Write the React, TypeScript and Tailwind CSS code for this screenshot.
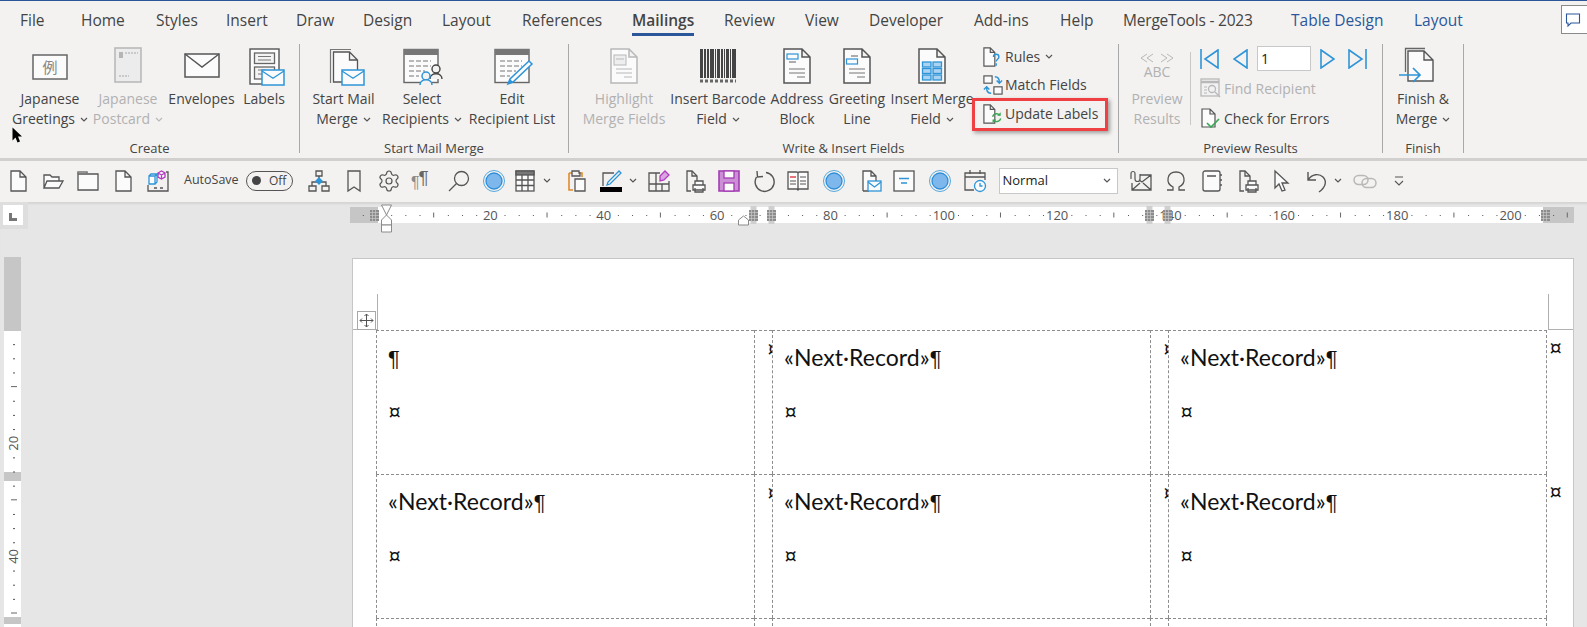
import React from "react";
import { Settings } from "lucide-react";

const INK = "#555555";
const BLUE = "#2e94d8";
const OFF = "#b8b8b8";

const page = (x: number, y: number, w: number, h: number, f: number) =>
  `M${x} ${y}H${x + w - f}L${x + w} ${y + f}V${y + h}H${x}ZM${x + w - f} ${y}V${y + f}H${x + w}`;

const Chevron = ({ color = "#555" }: { color?: string }) => (
  <svg width="8" height="5" viewBox="0 0 8 5" className="inline-block ml-[5px] align-[2px]">
    <path d="M1 1l3 3 3-3" fill="none" stroke={color} strokeWidth="1.2" />
  </svg>
);

const Mail = ({ x, y, w, h }: { x: number; y: number; w: number; h: number }) => (
  <g>
    <rect x={x} y={y} width={w} height={h} fill="#fbfbfb" stroke={BLUE} strokeWidth="1.5" />
    <path d={`M${x} ${y + 1}L${x + w / 2} ${y + h * 0.55}L${x + w} ${y + 1}`} fill="none" stroke={BLUE} strokeWidth="1.3" />
  </g>
);

const Big = ({
  cell,
  icon,
  lines,
  drop,
  off,
}: {
  cell: string;
  icon: React.ReactNode;
  lines: string[];
  drop?: boolean;
  off?: boolean;
}) => (
  <div className={`flex flex-col items-center shrink-0 ${cell} ${off ? "text-[#b1b1b1]" : "text-[#444]"}`}>
    <div className="h-[45px] flex items-center justify-center">{icon}</div>
    {lines.map((l, i) => (
      <div key={l} className="h-[20px] leading-[20px] whitespace-nowrap">
        {l}
        {drop && i === lines.length - 1 && <Chevron color={off ? OFF : "#555"} />}
      </div>
    ))}
  </div>
);

const Sep = () => <div className="w-px h-[109px] bg-[#a8a8a8] shrink-0" />;

const Group = ({ cls, label, children }: { cls: string; label: string; children: React.ReactNode }) => (
  <div className={`flex flex-col shrink-0 ${cls}`}>
    <div className="h-[94px] flex">{children}</div>
    <div className="h-[20px] leading-[20px] text-center text-[13px] text-[#444]">{label}</div>
  </div>
);

const Small = ({ cls, icon, text, drop, off }: { cls: string; icon: React.ReactNode; text: string; drop?: boolean; off?: boolean }) => (
  <div className={`flex items-center whitespace-nowrap ${cls} ${off ? "text-[#b1b1b1]" : "text-[#444]"}`}>
    {icon}
    <span>{text}</span>
    {drop && <Chevron />}
  </div>
);

/* ribbon icons */
const JapaneseIcon = () => (
  <svg width="36" height="26" viewBox="0 0 36 26">
    <rect x="1" y="1" width="34" height="24" fill="#fbfbfb" stroke="#666" strokeWidth="1.5" />
    <text x="18" y="19" textAnchor="middle" fontSize="15" fill="#888" fontFamily="'Noto Sans CJK JP',sans-serif">例</text>
  </svg>
);
const PostcardIcon = () => (
  <svg width="28" height="36" viewBox="0 0 28 36" className="mt-[-4px]">
    <rect x="1" y="1" width="26" height="34" fill="#ececec" stroke="#b9b9b9" strokeWidth="1.6" />
    <rect x="5" y="5" width="4" height="6" fill="#b5b5b5" />
    <path d="M11 6h13M5 29h10" stroke="#bdbdbd" strokeWidth="1.4" strokeDasharray="2 1" />
  </svg>
);
const EnvelopeIcon = () => (
  <svg width="36" height="25" viewBox="0 0 36 25" className="mt-[-2px]">
    <rect x="1" y="1" width="34" height="23" fill="#fbfbfb" stroke="#555" strokeWidth="1.5" />
    <path d="M1 1l17 13L35 1" fill="none" stroke="#555" strokeWidth="1.4" />
  </svg>
);
const LabelsIcon = () => (
  <svg width="36" height="38" viewBox="0 0 36 38" className="ml-[6px]">
    <rect x="1" y="1" width="29" height="35" fill="#fbfbfb" stroke="#555" strokeWidth="1.4" />
    <rect x="5.500" y="5" width="20" height="10.500" fill="#f3f3f3" stroke="#666" strokeWidth="1.3" />
    <rect x="5.500" y="19" width="20" height="12" fill="#f3f3f3" stroke="#666" strokeWidth="1.3" />
    <path d="M9 8.500h13M9 12h13M9 22h8M9 26h8" stroke="#777" strokeWidth="1.2" />
    <Mail x={13} y={22} w={22} h={15} />
  </svg>
);
const StartMergeIcon = () => (
  <svg width="36" height="38" viewBox="0 0 36 38" className="ml-[7px]">
    <path d="M1.500 35V1.500H22" fill="none" stroke="#777" strokeWidth="1.2" />
    <path d={page(4.5, 4, 24, 30, 8)} fill="#fbfbfb" stroke="#555" strokeWidth="1.3" />
    <Mail x={13} y={22} w={22} h={15} />
  </svg>
);
const ListBase = () => (
  <g>
    <rect x="1" y="1.500" width="34" height="33" fill="#fbfbfb" stroke="#666" strokeWidth="1.4" />
    <rect x="1" y="1" width="34" height="6" fill="#777" />
    <path d="M6 13h22M6 18h22M6 23h16M6 28h10" stroke="#777" strokeWidth="1.2" strokeDasharray="5 2" />
  </g>
);
const SelectIcon = () => (
  <svg width="40" height="38" viewBox="0 0 40 38" className="ml-[2px]">
    <ListBase />
    <circle cx="33" cy="21" r="4" fill="#f3f2f1" stroke="#444" strokeWidth="1.4" />
    <path d="M27 31c0-7 12-7 12 0" fill="#f3f2f1" stroke="#444" strokeWidth="1.4" />
    <circle cx="23" cy="28" r="4" fill="#f3f2f1" stroke={BLUE} strokeWidth="1.5" />
    <path d="M17 37c0-7 12-7 12 0" fill="#f3f2f1" stroke={BLUE} strokeWidth="1.5" />
  </svg>
);
const EditIcon = () => (
  <svg width="40" height="38" viewBox="0 0 40 38" className="ml-[4px]">
    <ListBase />
    <path d="M35 13l3 3-19 18-5 2 2-5z" fill="#fbfbfb" stroke={BLUE} strokeWidth="1.5" />
    <path d="M16 31l3 3-5 2z" fill={BLUE} />
  </svg>
);
const DocIcon = ({ stroke, children }: { stroke: string; children?: React.ReactNode }) => (
  <svg width="28" height="36" viewBox="0 0 28 36" className="mt-[-1px]">
    <path d={page(1, 1, 26, 34, 8)} fill="#fbfbfb" stroke={stroke} strokeWidth="1.5" />
    {children}
  </svg>
);
const TextRows = ({ c = "#777", from = 21 }: { c?: string; from?: number }) => (
  <path d={`M6 ${from}h16M6 ${from + 4}h16M14 ${from + 8}h8`} stroke={c} strokeWidth="1.2" />
);
const BarcodeIcon = () => {
  const bars = [[0, 3], [4, 2], [7, 2], [10, 4], [15, 1], [17, 3], [21, 2], [24, 1], [26, 3], [30, 1], [32, 4]];
  return (
    <svg width="37" height="36" viewBox="0 0 37 36" className="mt-[-1px]">
      {bars.map(([x, w]) => (
        <rect key={x} x={x} y="1" width={w} height="29" fill="#444" />
      ))}
      <path d="M0 33h36" stroke="#666" strokeWidth="3" strokeDasharray="3 2" />
    </svg>
  );
};
const RulesIcon = () => (
  <svg width="20" height="20" viewBox="0 0 22 22" className="mr-[2px] shrink-0">
    <path d={page(1, 1, 12, 20, 5)} fill="#fbfbfb" stroke="#555" strokeWidth="1.3" />
    <path d="M11.500 11c0-4 6-4 6 0 0 2.500-3 2.500-3 5M14.500 18v2.500" fill="none" stroke={BLUE} strokeWidth="1.6" />
  </svg>
);
const MatchIcon = () => (
  <svg width="20" height="20" viewBox="0 0 22 22" className="mr-[2px] shrink-0">
    <rect x="1" y="1" width="9" height="8" fill="#fbfbfb" stroke="#555" strokeWidth="1.3" />
    <rect x="12" y="13" width="9" height="8" fill="#fbfbfb" stroke="#555" strokeWidth="1.3" />
    <path d="M13 2c3 0 5 1 5 6M15 6l3 3 3-3M9 20c-3 0-5-1-5-6M1 16l3-3 3 3" fill="none" stroke={BLUE} strokeWidth="1.6" />
  </svg>
);
const UpdateIcon = () => (
  <svg width="20" height="20" viewBox="0 0 22 22" className="mr-[2px] shrink-0">
    <path d={page(1, 1, 12, 20, 5)} fill="#fbfbfb" stroke="#555" strokeWidth="1.3" />
    <path d="M10.500 14a4.500 4.500 0 0 1 8-1.500M19.500 16a4.500 4.500 0 0 1-8 1.500" fill="none" stroke="#3aa655" strokeWidth="1.6" />
    <path d="M19.500 9v4h-4zM10.500 21v-4h4z" fill="#3aa655" />
  </svg>
);
const PreviewIcon = () => (
  <div className="flex flex-col items-center mt-[1px]">
    <svg width="34" height="10" viewBox="0 0 34 10">
      <path d="M7 1L1 5l6 4M13 1L7 5l6 4M21 1l6 4-6 4M27 1l6 4-6 4" fill="none" stroke={OFF} strokeWidth="1" />
    </svg>
    <div className="text-[14px] leading-[18px] text-[#b1b1b1]">ABC</div>
  </div>
);
const NavIcon = ({ d, cls, w }: { d: string; cls: string; w: number }) => (
  <svg width={w} height="20" viewBox={`0 0 ${w} 20`} className={cls}>
    <path d={d} fill="none" stroke={BLUE} strokeWidth="1.6" />
  </svg>
);
const FindIcon = () => (
  <svg width="22" height="20" viewBox="0 0 22 20" className="mr-[2px] shrink-0">
    <rect x="1" y="1" width="18" height="17" fill="#f1f1f1" stroke={OFF} strokeWidth="1.3" />
    <path d="M1 4h18" stroke={OFF} strokeWidth="2.500" />
    <path d="M4 9h3M4 12h3M4 15h3" stroke={OFF} strokeWidth="1.2" />
    <circle cx="12" cy="11" r="3.500" fill="none" stroke={OFF} strokeWidth="1.3" />
    <path d="M15 14l5 5" stroke={OFF} strokeWidth="1.3" />
  </svg>
);
const CheckIcon = () => (
  <svg width="22" height="21" viewBox="0 0 22 21" className="ml-[1px] mr-[1px] shrink-0">
    <path d={page(1, 1, 13, 18, 5)} fill="#fbfbfb" stroke="#555" strokeWidth="1.2" />
    <path d="M6 15l4 4 8-8" fill="none" stroke="#3aa655" strokeWidth="1.6" />
  </svg>
);
const FinishIcon = () => (
  <svg width="36" height="37" viewBox="0 0 36 37" className="mt-[-2px] mr-[12px]">
    <path d="M6.500 25V1.500H26" fill="none" stroke="#666" strokeWidth="1.3" />
    <path d={page(9, 4, 25, 30, 9)} fill="#fbfbfb" stroke="#555" strokeWidth="1.4" />
    <path d="M0 28h20M14 21l7 7-7 7" fill="none" stroke={BLUE} strokeWidth="1.7" />
  </svg>
);

/* quick access icons */
const Q = ({ cls, children }: { cls?: string; children: React.ReactNode }) => (
  <svg width="24" height="24" viewBox="0 0 24 24" fill="none" stroke={INK} strokeWidth="1.3" className={`shrink-0 ${cls ?? ""}`}>
    {children}
  </svg>
);
const Ring = ({ cls }: { cls: string }) => (
  <Q cls={cls}>
    <circle cx="12" cy="12" r="8" fill="#7db7ec" stroke="#2e8fd8" />
    <circle cx="12" cy="12" r="10.500" stroke="#2e94d8" strokeWidth=".8" />
  </Q>
);
const PageQ = ({ cls }: { cls: string }) => (
  <Q cls={cls}>
    <path d={page(5, 2, 15, 20, 6)} fill="#fbfbfb" />
  </Q>
);
const QChevron = ({ cls }: { cls: string }) => (
  <svg width="8" height="5" viewBox="0 0 8 5" className={`shrink-0 ${cls}`}>
    <path d="M1 1l3 3 3-3" fill="none" stroke="#555" strokeWidth="1.2" />
  </svg>
);

const Grip = ({ x }: { x: number }) => (
  <g>
    <rect x={x - 4.5} y="3" width="9" height="11" fill="#8c8c8c" />
    <path d={`M${x - 4.5} 5.500h9M${x - 4.5} 8.500h9M${x - 4.5} 11.500h9M${x - 2} 3v11M${x + 1} 3v11`} stroke="#c8c8c8" strokeWidth=".7" />
  </g>
);

const HRuler = () => {
  const ticks = Array.from({ length: 86 }, (_, i) => i - 1);
  const X = (i: number) => 27 + i * 14.17;
  return (
    <svg width="1224" height="30" viewBox="0 0 1224 30" className="block overflow-visible">
      <rect x="0" y="0" width="1224" height="16" fill="#c6c6c6" />
      <rect x="28" y="0" width="1165" height="16" fill="#fff" />
      {[403.5, 421.5, 799.5, 817.5].map((x) => (
        <rect key={x} x={x - 3} y="-1" width="6" height="18" fill="#cfcfcf" />
      ))}
      {ticks.map((i) =>
        i === 0 ? null : i % 8 === 0 ? (
          <text key={i} x={X(i)} y="13" textAnchor="middle" fontSize="13" fill="#555" fontFamily="'Open Sans',sans-serif">
            {(i / 8) * 20}
          </text>
        ) : i % 8 === 4 ? (
          <path key={i} d={`M${X(i)} 5.500v5`} stroke="#666" />
        ) : (
          <rect key={i} x={X(i)} y="8" width="1" height="1" fill="#555" />
        )
      )}
      {[24.5, 403.5, 421.5, 799.5, 817.5, 1195.5].map((x) => (
        <Grip key={x} x={x} />
      ))}
      <path d="M31.500 -2h10L36.500 8zM36.500 8l5 5v5h-10v-5z" fill="#fff" stroke="#8a8a8a" />
      <path d="M31.500 18h10v7h-10z" fill="#fff" stroke="#8a8a8a" />
      <path d="M388.500 18v-5l5-4 5 4v5z" fill="#fff" stroke="#8a8a8a" />
    </svg>
  );
};

const VRuler = () => {
  const ticks = Array.from({ length: 21 }, (_, i) => i + 1);
  const Y = (i: number) => 73 + i * 14.15;
  return (
    <svg width="17" height="370" viewBox="0 0 17 370" className="block">
      <rect width="17" height="370" fill="#fff" />
      <rect width="17" height="74" fill="#c6c6c6" />
      <rect y="215" width="17" height="9" fill="#c6c6c6" />
      <rect y="360" width="17" height="7" fill="#c6c6c6" />
      {ticks.map((i) =>
        i % 8 === 0 ? (
          <text key={i} x="0" y="0" transform={`translate(14 ${Y(i)}) rotate(-90)`} textAnchor="middle" fontSize="13" fill="#555" fontFamily="'Open Sans',sans-serif">
            {(i / 8) * 20}
          </text>
        ) : i % 8 === 4 ? (
          <path key={i} d={`M7 ${Y(i)}h6`} stroke="#666" />
        ) : (
          <rect key={i} x="9" y={Y(i)} width="2" height="1" fill="#555" />
        )
      )}
    </svg>
  );
};

const Pilcrow = () => <span className="font-['Liberation_Sans',sans-serif] text-[22px]">¶</span>;

const LabelCell = ({ next, last }: { next?: boolean; last?: boolean }) => (
  <div className={`border-l border-t border-dashed border-[#8c8c8c] pl-[11px] ${last ? "border-r" : ""}`}>
    <div className="h-[52px] leading-[52px] text-[23px] tracking-[0.05px] whitespace-nowrap">
      {next && "«Next·Record»"}
      <Pilcrow />
    </div>
    <div className="h-[56px] leading-[56px] text-[23px]">¤</div>
  </div>
);
const GapCell = () => (
  <div className="border-l border-t border-dashed border-[#8c8c8c] pl-[12px] overflow-hidden">
    <div className="h-[34px] leading-[34px] text-[23px]">¤</div>
  </div>
);
const RowEnd = () => <div className="pl-[2px] h-[34px] leading-[34px] text-[23px]">¤</div>;

const Row = ({ first }: { first?: boolean }) => (
  <>
    <LabelCell next={!first} />
    <GapCell />
    <LabelCell next />
    <GapCell />
    <LabelCell next last />
    <RowEnd />
  </>
);

const tabs = [
  { t: "File", c: "w-[61px]" },
  { t: "Home", c: "w-[75px]" },
  { t: "Styles", c: "w-[70px]" },
  { t: "Insert", c: "w-[70px]" },
  { t: "Draw", c: "w-[67px]" },
  { t: "Design", c: "w-[79px]" },
  { t: "Layout", c: "w-[80px]" },
  { t: "References", c: "w-[110px]" },
  { t: "Mailings", c: "w-[92px] font-semibold" },
  { t: "Review", c: "w-[81px]" },
  { t: "View", c: "w-[64px]" },
  { t: "Developer", c: "w-[105px]" },
  { t: "Add-ins", c: "w-[86px]" },
  { t: "Help", c: "w-[63px]" },
  { t: "MergeTools - 2023", c: "w-[168px] tracking-[-0.2px]" },
  { t: "Table Design", c: "w-[123px] text-[#2b579a]" },
  { t: "Layout", c: "w-[60px] text-[#2b579a]" },
];

export default function App() {
  return (
    <div className="relative w-[1587px] h-[627px] overflow-hidden bg-[#e6e6e6] font-['Open_Sans',sans-serif] text-[14px] text-[#444]">
      {/* ribbon */}
      <div className="h-[158px] bg-[#f3f2f1] border-t border-[#2b579a]">
        <div className="h-[43px] flex pl-[20px]">
          {tabs.map((tab) => (
            <div key={tab.t + tab.c} className={`shrink-0 pt-[9px] leading-[20px] text-[15.5px] ${tab.c}`}>
              <span className={`inline-block whitespace-nowrap ${tab.t === "Mailings" ? "border-b-[3px] border-[#2b579a] pb-[3px]" : ""}`}>{tab.t}</span>
            </div>
          ))}
          <div className="ml-auto mt-[4px] w-[26px] h-[29px] bg-white border-l border-y border-[#8a8a8a] flex items-center justify-center">
            <svg width="16" height="16" viewBox="0 0 16 16" className="ml-[-3px]">
              <path d="M1.500 2h13v9H6l-3 3v-3H1.500z" fill="#fff" stroke="#2b579a" strokeWidth="1.1" />
            </svg>
          </div>
        </div>
        <div className="flex h-[114px]">
          <Group cls="w-[299px]" label="Create">
            <Big cell="w-[100px]" icon={<JapaneseIcon />} lines={["Japanese", "Greetings"]} drop />
            <Big cell="w-[56px]" icon={<PostcardIcon />} lines={["Japanese", "Postcard"]} drop off />
            <Big cell="w-[91px]" icon={<EnvelopeIcon />} lines={["Envelopes"]} />
            <Big cell="w-[34px]" icon={<LabelsIcon />} lines={["Labels"]} />
          </Group>
          <Sep />
          <Group cls="w-[268px]" label="Start Mail Merge">
            <Big cell="w-[87px]" icon={<StartMergeIcon />} lines={["Start Mail", "Merge"]} drop />
            <Big cell="w-[70px]" icon={<SelectIcon />} lines={["Select", "Recipients"]} drop />
            <Big cell="w-[110px]" icon={<EditIcon />} lines={["Edit", "Recipient List"]} />
          </Group>
          <Sep />
          <Group cls="w-[549px]" label="Write & Insert Fields">
            <Big
              cell="w-[110px]"
              off
              icon={
                <DocIcon stroke={OFF}>
                  <rect x="4" y="7" width="12" height="10" fill="#eee" stroke={OFF} />
                  <path d="M6 11h8" stroke={OFF} />
                  <TextRows c={OFF} />
                </DocIcon>
              }
              lines={["Highlight", "Merge Fields"]}
            />
            <Big cell="w-[78px]" icon={<BarcodeIcon />} lines={["Insert Barcode", "Field"]} drop />
            <Big
              cell="w-[80px]"
              icon={
                <DocIcon stroke="#555">
                  <rect x="4" y="6" width="11" height="5" fill="none" stroke={BLUE} strokeWidth="1.2" />
                  <path d="M6 14h7" stroke="#777" strokeWidth="1.2" />
                  <TextRows />
                </DocIcon>
              }
              lines={["Address", "Block"]}
            />
            <Big
              cell="w-[40px]"
              icon={
                <DocIcon stroke="#555">
                  <path d="M8 8h7" stroke="#777" strokeWidth="1.2" />
                  <rect x="3.500" y="11" width="11" height="5" fill="none" stroke={BLUE} strokeWidth="1.2" />
                  <TextRows />
                </DocIcon>
              }
              lines={["Greeting", "Line"]}
            />
            <Big
              cell="w-[102px] ml-[4px]"
              icon={
                <DocIcon stroke="#555">
                  <g fill="#a9d2f3" stroke={BLUE} strokeWidth="1.3">
                    <rect x="4.500" y="14" width="8.500" height="5" />
                    <rect x="15" y="14" width="8.500" height="5" />
                    <rect x="4.500" y="20.500" width="8.500" height="5" />
                    <rect x="15" y="20.500" width="8.500" height="5" />
                    <rect x="4.500" y="27" width="8.500" height="5" />
                    <rect x="15" y="27" width="8.500" height="5" />
                  </g>
                </DocIcon>
              }
              lines={["Insert Merge", "Field"]}
              drop
            />
            <div className="flex flex-col shrink-0">
              <Small cls="h-[25px]" icon={<RulesIcon />} text="Rules" drop />
              <Small cls="h-[29px] mt-[1px]" icon={<MatchIcon />} text="Match Fields" />
              <Small cls="h-[29px]" icon={<UpdateIcon />} text="Update Labels" />
            </div>
          </Group>
          <Sep />
          <Group cls="w-[263px]" label="Preview Results">
            <Big cell="w-[71px] pl-[5px]" off icon={<PreviewIcon />} lines={["Preview", "Results"]} />
            <div className="w-px h-[73px] mt-[8px] bg-[#c8c8c8] shrink-0" />
            <div className="flex flex-col pl-[9px]">
              <div className="flex items-center h-[25px] mt-[2px]">
                <NavIcon w={19} cls="" d="M1 0v20M18 1L5 10l13 9z" />
                <NavIcon w={15} cls="ml-[14px]" d="M14 1L1 10l13 9z" />
                <div className="ml-[9px] w-[54px] h-[25px] bg-white border border-[#c8c8c8] pl-[3px] leading-[23px] text-[#222]">1</div>
                <NavIcon w={15} cls="ml-[9px]" d="M1 1l13 9-13 9z" />
                <NavIcon w={19} cls="ml-[13px]" d="M18 0v20M1 1l13 9-13 9z" />
              </div>
              <Small cls="h-[20px] mt-[7px]" off icon={<FindIcon />} text="Find Recipient" />
              <Small cls="h-[20px] mt-[10px]" icon={<CheckIcon />} text="Check for Errors" />
            </div>
          </Group>
          <Sep />
          <Group cls="w-[80px]" label="Finish">
            <Big cell="w-[80px]" icon={<FinishIcon />} lines={["Finish &", "Merge"]} drop />
          </Group>
          <Sep />
        </div>
      </div>
      <div className="h-[3px] bg-[#d2d0ce]" />

      {/* quick access toolbar */}
      <div className="h-[41px] bg-[#f3f2f1] flex items-center pl-[6px] pb-[2px]">
        <PageQ cls="" />
        <Q cls="ml-[10.5px]">
          <path d="M3 19V6h6l2 2h7v4M3 19l3-7h16l-4 7z" fill="#fbfbfb" />
        </Q>
        <Q cls="ml-[11px]">
          <path d="M2 5h20v16H2z" fill="#fbfbfb" />
          <path d="M2 5V3h9v2" strokeWidth="1.6" stroke="#777" />
        </Q>
        <PageQ cls="ml-[11.5px]" />
        <Q cls="ml-[10.5px]">
          <path d="M20 3h2v19H2v-6" />
          <path d="M8 19h3M14 19h3" />
          <path d="M3 7h6v8H3zM3 7l2-2h6l-2 2M9 15l2-2V5" stroke={BLUE} fill="#fbfbfb" />
          <path d="M12 4l3.500-2 3.500 2v4l-3.500 2-3.500-2zM12 4l3.500 2 3.500-2M15.500 6v4" stroke="#b13cc0" fill="#fbfbfb" />
        </Q>
        <div className="ml-[14.5px] w-[53px] text-[12.5px] whitespace-nowrap">AutoSave</div>
        <div className="ml-[9px] w-[47px] h-[20px] rounded-full border border-[#555] flex items-center pl-[5px] shrink-0">
          <div className="w-[9px] h-[9px] rounded-full bg-[#444]" />
          <span className="ml-[8px] text-[12px]">Off</span>
        </div>
        <Q cls="ml-[14px]">
          <path d="M9 2h6v5H9zM2 17h7v5H2zM15 17h7v5h-7zM12 7v3M5 17v-4h14v4" />
          <path d="M12 9l3 3-3 3-3-3z" fill={BLUE} stroke={BLUE} />
        </Q>
        <Q cls="ml-[10.5px]">
          <path d="M6 2h12v20l-6-4-6 4z" />
        </Q>
        <Settings size={24} strokeWidth={1.2} color={INK} className="ml-[11px] shrink-0" />
        <div className="ml-[10.5px] w-[24px] shrink-0 whitespace-nowrap font-['Liberation_Sans',sans-serif] leading-[20px] text-[#8a8a8a] tracking-[-1px]">
          <span className="inline-block translate-y-[2px] text-[16px]">¶</span>
          <span className="inline-block -translate-y-[2px] text-[19px] text-[#666]">¶</span>
        </div>
        <Q cls="ml-[12px]">
          <circle cx="14.500" cy="9.500" r="7" />
          <path d="M9.500 14.500L2 22" />
        </Q>
        <Ring cls="ml-[11px]" />
        <Q cls="ml-[7px]">
          <rect x="3" y="2" width="18" height="20" fill="#fbfbfb" />
          <rect x="3" y="2" width="18" height="4" fill="#777" />
          <path d="M3 11h18M3 16.500h18M9 6v16M15 6v16" />
        </Q>
        <QChevron cls="ml-[6px]" />
        <Q cls="ml-[13px]">
          <path d="M5 4h13v4M5 4v17h4" stroke="#e08a2b" strokeWidth="1.6" />
          <path d="M8 4V2h7v2h1v3H8z" fill="#f3f2f1" />
          <path d="M11 10h10v12H11z" fill="#fbfbfb" />
        </Q>
        <Q cls="ml-[11px]">
          <path d="M15 4H4v13" />
          <path d="M20 2l2 2-11 11-3 1 1-3z" stroke={BLUE} />
          <rect x="1" y="18" width="22" height="5" fill="#000" stroke="none" />
        </Q>
        <QChevron cls="ml-[5.5px]" />
        <Q cls="ml-[10.5px]">
          <path d="M13 4H2v18h20V12M9 4v18M2 15h20M15 15v7" />
          <path d="M13 7l5-5 4 4-5 5-4 1z" stroke="#b13cc0" fill="#d9a6e0" />
        </Q>
        <Q cls="ml-[12px]">
          <path d="M14 12V7l-5-5H4v20h4" />
          <path d="M9 2v5h5" />
          <path d="M10 16h12v5H10zM12 16v-4h8v4M12 19v4h8v-4" fill="#fbfbfb" />
        </Q>
        <Q cls="ml-[10px]">
          <path d="M2 2h20v20H2z" fill="#cc8fd6" stroke="#a23db3" strokeWidth="1.6" />
          <rect x="7" y="2" width="10" height="7" fill="#fbfbfb" stroke="#a23db3" />
          <rect x="7" y="14" width="10" height="8" fill="#fbfbfb" stroke="#a23db3" />
        </Q>
        <Q cls="ml-[10.5px]">
          <path d="M14 3.500A9.500 9.500 0 1 1 4.500 8M5 2l.5 6 5.500-.5" strokeWidth="1.4" />
        </Q>
        <Q cls="ml-[10.5px]">
          <path d="M2 3h9l1 1 1-1h9v17H13l-1 1-1-1H2zM12 4v16" fill="#fbfbfb" />
          <path d="M4 8h6" stroke="#e2454f" strokeWidth="1.5" />
          <path d="M4 12h6M4 15h6M14 8h6M14 12h6M14 15h6" strokeWidth="1" />
        </Q>
        <Ring cls="ml-[12px]" />
        <Q cls="ml-[12px]">
          <path d="M5 22V2h8l5 5v5M13 2v5h5M5 22h6" fill="#fbfbfb" />
          <rect x="10" y="12" width="13" height="10" fill="#fbfbfb" stroke={BLUE} />
          <path d="M10 13l6.500 5 6.500-5" stroke={BLUE} />
        </Q>
        <Q cls="ml-[10px]">
          <rect x="2" y="2" width="20" height="20" fill="#fbfbfb" />
          <path d="M7 9.500h10M9 14h6" stroke={BLUE} strokeWidth="1.6" />
        </Q>
        <Ring cls="ml-[12px]" />
        <Q cls="ml-[11px]">
          <path d="M11 21H2V4h20v7" />
          <path d="M2 8h20M7 1v4M17 1v4" />
          <circle cx="17" cy="17" r="5.500" fill="#fbfbfb" stroke={BLUE} />
          <path d="M17 14v3h2.500" stroke={BLUE} />
        </Q>
        <div className="ml-[11.5px] w-[119.5px] h-[26px] bg-white border border-[#c8c8c8] flex items-center justify-between pl-[3px] pr-[6px] shrink-0 text-[13px] text-[#222]">
          Normal
          <QChevron cls="" />
        </div>
        <Q cls="ml-[11px]">
          <path d="M11 6h11v15H3v-7M22 6l-9 7-3-2M3 21l8-7M22 21l-8-7" />
          <path d="M2 10V4.500a2 2 0 0 1 4 0V10a2.500 2.500 0 0 0 5 0V5" strokeWidth="1.2" />
        </Q>
        <Q cls="ml-[11px]">
          <path d="M3 21h6v-3c-8-4-6-15 3-15s11 11 3 15v3h6" />
        </Q>
        <Q cls="ml-[12px]">
          <rect x="3" y="2" width="17" height="20" rx="2" fill="#fbfbfb" />
          <path d="M7 7h9M20 6h2M20 11h2M20 16h2" strokeWidth="1.5" />
        </Q>
        <Q cls="ml-[12px]">
          <path d="M14 12V7l-5-5H4v20h4" />
          <path d="M9 2v5h5" />
          <path d="M10 16h12v5H10zM12 16v-4h8v4M12 19v4h8v-4" fill="#fbfbfb" />
        </Q>
        <Q cls="ml-[9px]">
          <path d="M6 2v17l4-4 3 7 3-1-3-7h6z" fill="#fbfbfb" />
        </Q>
        <Q cls="ml-[12px]">
          <path d="M3 3v8h8M3 11C7 5 14 4 18 8s3 10-4 15" strokeWidth="1.4" />
        </Q>
        <QChevron cls="ml-[5px]" />
        <Q cls="ml-[11px]">
          <rect x="1" y="6.500" width="14" height="9" rx="4.500" stroke={OFF} strokeWidth="1.5" />
          <rect x="9" y="9.500" width="14" height="9" rx="4.500" stroke={OFF} strokeWidth="1.5" />
        </Q>
        <Q cls="ml-[10px]">
          <path d="M8 8h8M8 12l4 4 4-4" strokeWidth="1.1" />
        </Q>
      </div>

      {/* document area */}
      <div className="h-[425px] flex shadow-[inset_0_3px_2px_-1px_#d4d4d4]">
        <div className="w-[350px] shrink-0">
          <div className="w-[28px] h-[27px] bg-[#dedede] pl-[3px] pt-[3px]">
            <div className="w-[20px] h-[20px] bg-white flex items-end justify-center pb-[4px]">
              <div className="w-[8px] h-[8px] border-l-[3px] border-b-[3px] border-[#777]" />
            </div>
          </div>
          <div className="mt-[28px] ml-[4px]">
            <VRuler />
          </div>
        </div>
        <div className="w-[1224px] shrink-0 pt-[5px]">
          <HRuler />
          <div className="relative ml-[2px] mt-[21px] w-[1222px] h-[400px] bg-white border-l border-t border-r border-[#c6c6c6] overflow-hidden font-['Lato',sans-serif] text-[#111]">
            {/* crop marks and table handle */}
            <div className="absolute left-0 top-[70px] w-[25px] border-t border-[#b0b0b0]" />
            <div className="absolute left-[24px] top-[35px] h-[36px] border-l border-[#b0b0b0]" />
            <div className="absolute left-[1195px] top-[35px] h-[36px] border-l border-[#b0b0b0]" />
            <div className="absolute left-[1195px] top-[70px] w-[27px] border-t border-[#b0b0b0]" />
            <div className="absolute left-[4px] top-[52px] w-[19px] h-[19px] bg-white border border-[#a8a8a8] flex items-center justify-center">
              <svg width="15" height="15" viewBox="0 0 15 15">
                <path d="M7.500 1v13M1 7.500h13M5.500 3l2-2 2 2M5.500 12l2 2 2-2M3 5.500l-2 2 2 2M12 5.500l2 2-2 2" fill="none" stroke="#555" strokeWidth="1" />
              </svg>
            </div>
            <div className="pl-[23px] pt-[71px] grid grid-cols-[378px_18px_378px_18px_379px_28px] auto-rows-[144px]">
              <Row first />
              <Row />
              <Row />
            </div>
          </div>
        </div>
      </div>

      {/* red highlight around Update Labels */}
      <div className="absolute left-[972px] top-[98px] w-[136px] h-[33px] border-[3px] border-[#ef4044] shadow-[2px_2px_4px_rgba(0,0,0,0.35)]" />

      {/* mouse pointer */}
      <svg width="10" height="17" viewBox="0 0 10 17" className="absolute left-[12px] top-[127px]">
        <path d="M0.500 0.500v13l3-3 2 5 2.500-1-2-5h4z" fill="#000" />
      </svg>
    </div>
  );
}
